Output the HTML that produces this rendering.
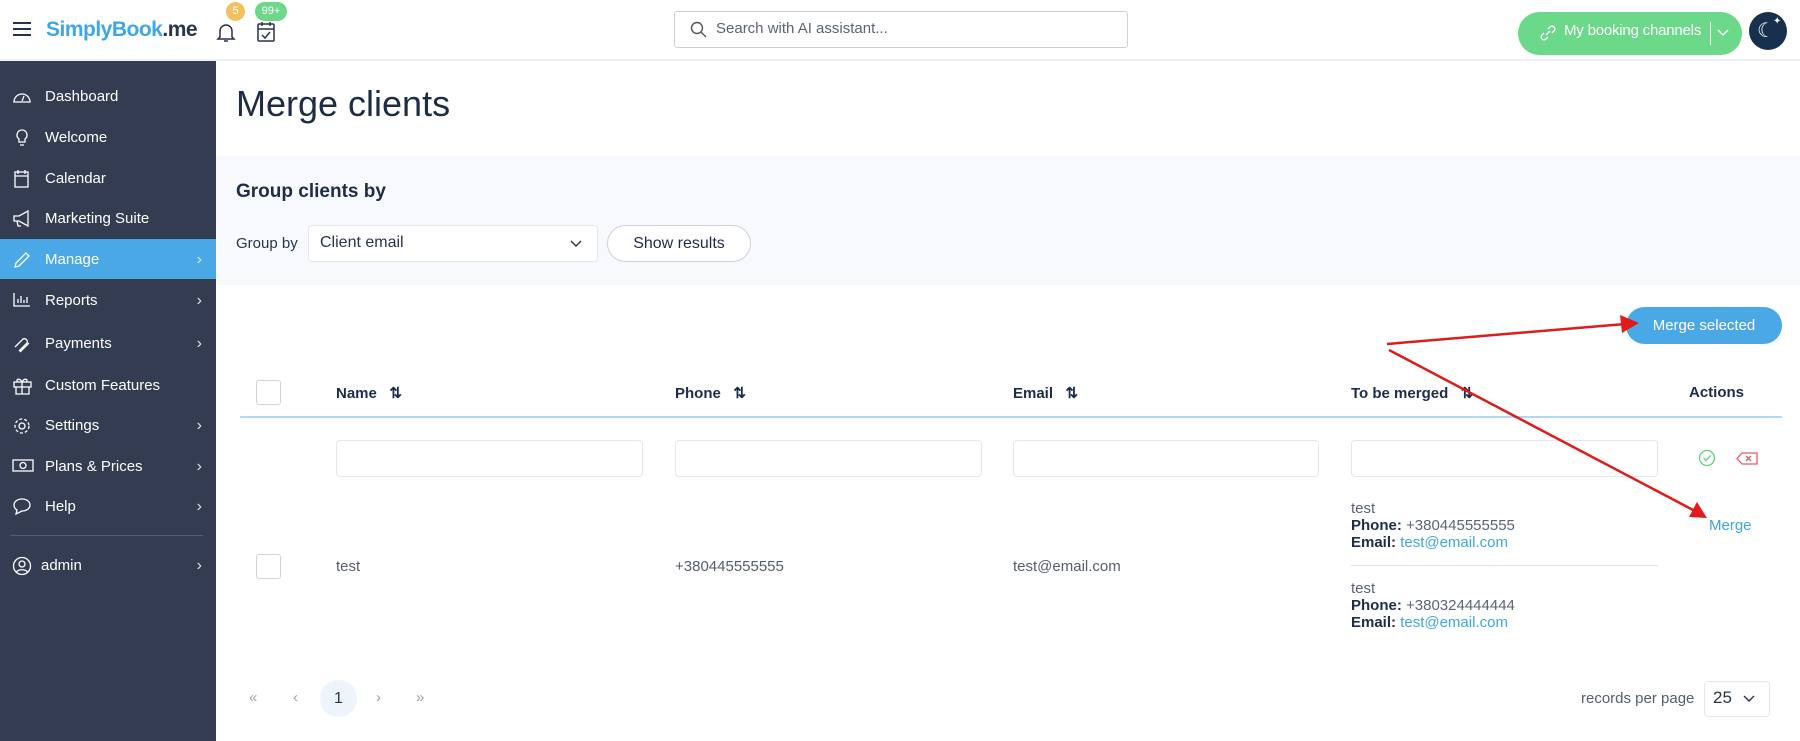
<!DOCTYPE html>
<html><head><meta charset="utf-8"><style>
*{box-sizing:border-box;margin:0;padding:0}
body{width:1800px;height:741px;overflow:hidden;font-family:"Liberation Sans",sans-serif;background:#fff;position:relative;color:#283449}
.a{position:absolute}
.hdr{left:0;top:0;width:1800px;height:61px;background:#fff;border-bottom:2px solid #eef1f6}
.side{left:0;top:61px;width:216px;height:680px;background:#333c50}
.mi{position:absolute;left:0;width:216px;height:40px;color:#fff;font-size:15px;line-height:42px;padding-left:45px}
.mi svg{position:absolute;left:12px;top:11px}
.mi .ch{position:absolute;right:14px;top:0;font-size:16px;color:#dfe3ea}
.inp{position:absolute;height:37px;border:1px solid #e3e6ec;border-radius:4px;background:#fff}
.th{position:absolute;top:384px;font-weight:bold;font-size:15px;color:#1d2e4a}
.cb{position:absolute;width:25px;height:25px;border:1px solid #cfd4dc;border-radius:3px;background:#fff}
.cell{position:absolute;font-size:15px;color:#555e6b}
.m{position:absolute;left:1351px;font-size:15px;line-height:17px;color:#5d6572}
.m b{color:#1d2e4a}
.m span{color:#3ea6e5}
</style></head><body>
<div class="a hdr"></div>
<div class="a" style="left:13px;top:22px;width:18px;height:2px;background:#283449;box-shadow:0 6px 0 #283449,0 12px 0 #283449"></div>
<div class="a" style="left:46px;top:18px;font-size:21px;font-weight:bold;color:#3fa7e6;letter-spacing:-0.5px">SimplyBook<span style="color:#283449">.me</span></div>
<svg class="a" style="left:214px;top:20px" width="24" height="24" viewBox="0 0 24 24" fill="none" stroke="#283449" stroke-width="1.5"><path d="M6 17V11a6 6 0 0 1 12 0v6l2 2H4z"/><path d="M10 21h4"/></svg>
<div class="a" style="left:226px;top:2px;width:19px;height:19px;border-radius:50%;background:#f4c160;color:#fff;font-size:11px;text-align:center;line-height:19px">5</div>
<svg class="a" style="left:256px;top:21px" width="20" height="22" viewBox="0 0 20 22" fill="none" stroke="#283449" stroke-width="1.5"><rect x="2" y="3" width="16" height="17" rx="1"/><path d="M2 8h16M6 1v4M14 1v4M6 14l3 3 5-6"/></svg>
<div class="a" style="left:255px;top:2px;width:32px;height:19px;border-radius:10px;background:#6bd88a;color:#fff;font-size:11px;text-align:center;line-height:19px">99+</div>
<div class="a" style="left:674px;top:11px;width:454px;height:37px;border:1px solid #cdd2da;border-radius:3px"></div>
<svg class="a" style="left:690px;top:21px" width="17" height="17" viewBox="0 0 17 17" fill="none" stroke="#555" stroke-width="1.4"><circle cx="7" cy="7" r="5.5"/><path d="M11 11l5 5"/></svg>
<div class="a" style="left:716px;top:20px;font-size:15px;color:#5c6470">Search with AI assistant...</div>
<div class="a" style="left:1518px;top:12px;width:224px;height:43px;border-radius:22px;background:#6cd98a"></div>
<svg class="a" style="left:1539px;top:24px" width="18" height="18" viewBox="0 0 18 18" fill="none" stroke="#fff" stroke-width="1.4"><path d="M7 11l4-4M5 9l-2 2a2.8 2.8 0 0 0 4 4l2-2M13 9l2-2a2.8 2.8 0 0 0-4-4L9 5"/></svg>
<div class="a" style="left:1564px;top:22px;font-size:15px;color:#fff;letter-spacing:-0.2px">My booking channels</div>
<div class="a" style="left:1710px;top:22px;width:1px;height:23px;background:#fff"></div>
<svg class="a" style="left:1717px;top:29px" width="12" height="8" fill="none" stroke="#fff" stroke-width="1.4"><path d="M1 1l5 5 5-5"/></svg>
<div class="a" style="left:1749px;top:12px;width:38px;height:38px;border-radius:50%;background:#17304d"></div>
<div class="a" style="left:1757px;top:18px;font-size:20px;color:#fff">☾</div>
<div class="a" style="left:1773px;top:16px;font-size:10px;color:#fff">✦</div>

<div class="a side">
<div class="mi" style="top:15px"><svg width="20" height="18" fill="none" stroke="#fff" stroke-width="1.3"><path d="M2 15a8 8 0 1 1 16 0z"/><path d="M10 14l2-5"/></svg>Dashboard</div>
<div class="mi" style="top:56px"><svg width="20" height="20" fill="none" stroke="#fff" stroke-width="1.3"><path d="M10 2a5 5 0 0 0-3 9v3h6v-3a5 5 0 0 0-3-9zM8 17h4"/></svg>Welcome</div>
<div class="mi" style="top:97px"><svg width="20" height="20" fill="none" stroke="#fff" stroke-width="1.3"><rect x="3" y="3" width="13" height="15"/><path d="M3 7h13M6 1v4M13 1v4"/></svg>Calendar</div>
<div class="mi" style="top:137px"><svg width="22" height="20" fill="none" stroke="#fff" stroke-width="1.3"><path d="M2 7h5l9-5v15l-9-5H2zM5 12l1 5h3"/></svg>Marketing Suite</div>
<div class="mi" style="top:178px;background:#4aa8e6"><svg width="20" height="20" fill="none" stroke="#fff" stroke-width="1.3"><path d="M3 17l1-4L14 3l3 3L7 16z"/></svg>Manage<span class="ch">›</span></div>
<div class="mi" style="top:219px"><svg width="20" height="18" fill="none" stroke="#fff" stroke-width="1.3"><path d="M2 2v13h16M6 12V8M9 12V5M12 12V9M15 12V6"/></svg>Reports<span class="ch">›</span></div>
<div class="mi" style="top:262px"><svg width="22" height="20" fill="none" stroke="#fff" stroke-width="1.3"><path d="M3 13l8-8a3 3 0 0 1 4 4l-8 8M8 18l9-9"/></svg>Payments<span class="ch">›</span></div>
<div class="mi" style="top:304px"><svg width="22" height="20" fill="none" stroke="#fff" stroke-width="1.3"><rect x="2" y="6" width="17" height="5"/><path d="M4 11v7h13v-7M10 6v12M10 6c-3-5-7-2-4 0M10 6c3-5 7-2 4 0"/></svg>Custom Features</div>
<div class="mi" style="top:344px"><svg width="20" height="20" fill="none" stroke="#fff" stroke-width="1.3"><circle cx="10" cy="10" r="3"/><circle cx="10" cy="10" r="7" stroke-dasharray="3 2"/></svg>Settings<span class="ch">›</span></div>
<div class="mi" style="top:385px"><svg width="22" height="18" fill="none" stroke="#fff" stroke-width="1.3"><rect x="1" y="3" width="20" height="11"/><circle cx="11" cy="8.5" r="3"/></svg>Plans &amp; Prices<span class="ch">›</span></div>
<div class="mi" style="top:425px"><svg width="20" height="18" fill="none" stroke="#fff" stroke-width="1.3"><path d="M10 2c5 0 8 3 8 6s-3 6-8 6l-6 3 1-4c-2-1-3-3-3-5 0-3 3-6 8-6z"/></svg>Help<span class="ch">›</span></div>
<div class="a" style="left:10px;top:474px;width:193px;height:1px;background:#555e70"></div>
<div class="mi" style="top:484px;padding-left:41px"><svg width="20" height="20" fill="none" stroke="#fff" stroke-width="1.3"><circle cx="10" cy="10" r="8.5"/><circle cx="10" cy="8" r="3"/><path d="M4.5 16c2-3 9-3 11 0"/></svg>admin<span class="ch">›</span></div>
</div>

<div class="a" style="left:236px;top:83px;font-size:36px;color:#1f2d44">Merge clients</div>
<div class="a" style="left:216px;top:156px;width:1584px;height:129px;background:#f7f9fd"></div>
<div class="a" style="left:236px;top:181px;font-size:19px;font-weight:bold;color:#1f2d44">Group clients by</div>
<div class="a" style="left:236px;top:235px;font-size:15px;color:#283449">Group by</div>
<div class="inp" style="left:308px;top:225px;width:290px"></div>
<div class="a" style="left:320px;top:234px;font-size:16px;color:#283449">Client email</div>
<svg class="a" style="left:570px;top:240px" width="12" height="8" fill="none" stroke="#283449" stroke-width="1.4"><path d="M1 1l5 5 5-5"/></svg>
<div class="a" style="left:607px;top:225px;width:144px;height:37px;border:1px solid #cdd2da;border-radius:19px;background:#fff;font-size:16px;text-align:center;line-height:35px;color:#1f2d44">Show results</div>

<div class="a" style="left:1626px;top:307px;width:156px;height:37px;border-radius:19px;background:#4aa8e6;color:#fff;font-size:15px;text-align:center;line-height:37px">Merge selected</div>

<div class="cb" style="left:256px;top:380px"></div>
<div class="th" style="left:336px">Name &nbsp; ⇅</div>
<div class="th" style="left:675px">Phone &nbsp; ⇅</div>
<div class="th" style="left:1013px">Email &nbsp; ⇅</div>
<div class="th" style="left:1351px">To be merged &nbsp; ⇅</div>
<div class="th" style="left:1689px">Actions</div>
<div class="a" style="left:240px;top:416px;width:1542px;height:2px;background:#b5d8f2"></div>
<div class="inp" style="left:336px;top:440px;width:307px"></div>
<div class="inp" style="left:675px;top:440px;width:307px"></div>
<div class="inp" style="left:1013px;top:440px;width:306px"></div>
<div class="inp" style="left:1351px;top:440px;width:307px"></div>
<svg class="a" style="left:1698px;top:449px" width="18" height="18" fill="none" stroke="#5fcf7d" stroke-width="1.3"><circle cx="9" cy="9" r="7.5"/><path d="M5.5 9l2.5 2.5 4.5-5"/></svg>
<svg class="a" style="left:1736px;top:451px" width="22" height="15" fill="none" stroke="#e85a6a" stroke-width="1.3"><path d="M1 7.5L6 2h15v11H6z"/><path d="M10 5l5 5M15 5l-5 5"/></svg>

<div class="cb" style="left:256px;top:554px"></div>
<div class="cell" style="left:336px;top:558px">test</div>
<div class="cell" style="left:675px;top:558px">+380445555555</div>
<div class="cell" style="left:1013px;top:558px">test@email.com</div>
<div class="m" style="top:500px">test<br><b>Phone:</b> +380445555555<br><b>Email:</b> <span>test@email.com</span></div>
<div class="a" style="left:1351px;top:565px;width:307px;height:1px;background:#dfe2e7"></div>
<div class="m" style="top:580px">test<br><b>Phone:</b> +380324444444<br><b>Email:</b> <span>test@email.com</span></div>
<div class="a" style="left:1709px;top:517px;font-size:15px;color:#3ea6e5">Merge</div>

<div class="a" style="left:249px;top:689px;font-size:15px;color:#9aa2ad">«</div>
<div class="a" style="left:293px;top:689px;font-size:15px;color:#9aa2ad">‹</div>
<div class="a" style="left:320px;top:680px;width:37px;height:37px;border-radius:50%;background:#eef4fc;text-align:center;line-height:37px;font-size:16px;color:#283449">1</div>
<div class="a" style="left:376px;top:689px;font-size:15px;color:#9aa2ad">›</div>
<div class="a" style="left:416px;top:689px;font-size:15px;color:#9aa2ad">»</div>
<div class="a" style="left:1581px;top:690px;font-size:15px;color:#555e6b">records per page</div>
<div class="inp" style="left:1704px;top:681px;width:66px;height:36px"></div>
<div class="a" style="left:1713px;top:688px;font-size:17px;color:#283449">25</div>
<svg class="a" style="left:1743px;top:695px" width="12" height="8" fill="none" stroke="#283449" stroke-width="1.4"><path d="M1 1l5 5 5-5"/></svg>

<svg class="a" style="left:0;top:0" width="1800" height="741">
<path d="M1387 344L1625 324" stroke="#e01b1b" stroke-width="2.5"/>
<path d="M1639 323L1620 315L1622 333Z" fill="#e01b1b"/>
<path d="M1389 350L1695 511" stroke="#e01b1b" stroke-width="2.5"/>
<path d="M1707 518L1697 502L1689 517Z" fill="#e01b1b"/>
</svg>
</body></html>
